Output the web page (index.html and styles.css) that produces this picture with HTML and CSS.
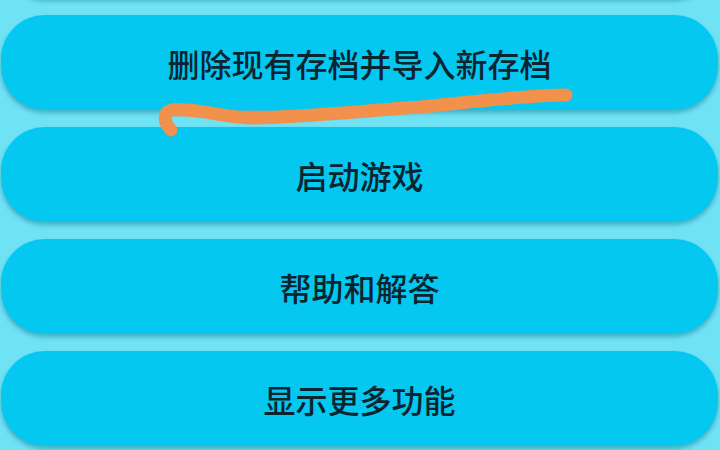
FILE: index.html
```html
<!DOCTYPE html>
<html lang="zh-CN">
<head>
<meta charset="utf-8">
<title>菜单</title>
<link rel="stylesheet" href="styles.css">
</head>
<body>
<div class="menu">
  <div class="btn"></div>
  <div class="btn"><span class="label">删除现有存档并导入新存档</span></div>
  <div class="btn"><span class="label">启动游戏</span></div>
  <div class="btn"><span class="label">帮助和解答</span></div>
  <div class="btn"><span class="label">显示更多功能</span></div>
</div>
<svg class="scribble" width="720" height="450" viewBox="0 0 720 450">
  <path d="M171,130 C163,121 163,112 172,110 C200,108 230,119 255,118 C300,117 350,112 420,107 C480,101 530,95 566,95" fill="none" stroke="#f2914b" stroke-width="13" stroke-linecap="round" stroke-linejoin="round"/>
</svg>
</body>
</html>
```
FILE: styles.css
```css
html, body {
  margin: 0;
  padding: 0;
}
body {
  width: 720px;
  height: 450px;
  overflow: hidden;
  background: #6fe2f4;
  position: relative;
  font-family: "Noto Sans CJK SC", "Noto Sans", sans-serif;
}
.menu {
  display: flex;
  flex-direction: column;
  gap: 17px;
  margin-top: -97px;
  padding: 0 2px 0 1px;
}
.btn {
  height: 95px;
  border-radius: 44px;
  background: #04c8f0;
  box-shadow: 0 3px 4px rgba(20, 110, 140, 0.45);
  display: flex;
  align-items: center;
  justify-content: center;
}
.label {
  font-size: 32px;
  font-weight: 500;
  color: #0a2530;
  line-height: 1;
}
.scribble {
  position: absolute;
  left: 0;
  top: 0;
  pointer-events: none;
}
```
